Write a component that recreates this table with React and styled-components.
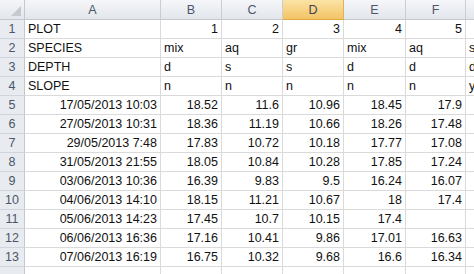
import React from "react";
import styled, { createGlobalStyle } from "styled-components";

const Global = createGlobalStyle`
    html, body {
        margin: 0;
        padding: 0;
        background: #ffffff;
        overflow: hidden;
    }
    body {
        font-family: "Liberation Sans", Arial, sans-serif;
    }
`;

const Sheet = styled.div`
    display: grid;
    grid-template-columns: 25px 136px 61px 61px 61px 62px 60px 64px;
    grid-template-rows: 20px;
    grid-auto-rows: 19px;
    width: 474px;
    height: 274px;
    overflow: hidden;
    font-size: 12.5px;
    color: #111;
`;

const Corner = styled.div`
    position: relative;
    background: linear-gradient(#f3f5f8, #e3e7ec);
    border-right: 1px solid #c3c8cf;
    border-bottom: 1px solid #c3c8cf;
    box-sizing: border-box;

    &::after {
        content: "";
        position: absolute;
        right: 3px;
        bottom: 3px;
        width: 0;
        height: 0;
        border-left: 10px solid transparent;
        border-bottom: 10px solid #c5cad1;
    }
`;

const ColHead = styled.div`
    box-sizing: border-box;
    display: flex;
    align-items: center;
    justify-content: center;
    padding-top: 1px;
    color: ${(p) => (p.$active ? "#3d4455" : "#4a5669")};
    background: ${(p) =>
        p.$active
            ? "linear-gradient(#fbe3a6, #f3c466)"
            : "linear-gradient(#f5f6f9, #e2e6eb)"};
    border-right: 1px solid ${(p) => (p.$active ? "#e3b258" : "#c9ced5")};
    border-bottom: 1px solid ${(p) => (p.$active ? "#e0a93f" : "#c3c8cf")};
`;

const RowHead = styled.div`
    box-sizing: border-box;
    display: flex;
    align-items: flex-end;
    justify-content: center;
    padding-bottom: 2px;
    overflow: hidden;
    color: #4a5669;
    background: #e8ebef;
    border-right: 1px solid #c3c8cf;
    border-bottom: 1px solid #d0d5db;
`;

const Cell = styled.div`
    box-sizing: border-box;
    display: flex;
    align-items: flex-end;
    justify-content: ${(p) => (p.$num ? "flex-end" : "flex-start")};
    padding: 0 3px 2px 3px;
    white-space: nowrap;
    overflow: hidden;
    border-right: 1px solid #dadada;
    border-bottom: 1px solid #dadada;
`;

const columns = ["A", "B", "C", "D", "E", "F", "G"];

// column G runs past the right edge, only its first letters show
const rows = [
    ["PLOT", 1, 2, 3, 4, 5, ""],
    ["SPECIES", "mix", "aq", "gr", "mix", "aq", "s"],
    ["DEPTH", "d", "s", "s", "d", "d", "d"],
    ["SLOPE", "n", "n", "n", "n", "n", "y"],
    ["17/05/2013 10:03", 18.52, 11.6, 10.96, 18.45, 17.9, ""],
    ["27/05/2013 10:31", 18.36, 11.19, 10.66, 18.26, 17.48, ""],
    ["29/05/2013 7:48", 17.83, 10.72, 10.18, 17.77, 17.08, ""],
    ["31/05/2013 21:55", 18.05, 10.84, 10.28, 17.85, 17.24, ""],
    ["03/06/2013 10:36", 16.39, 9.83, 9.5, 16.24, 16.07, ""],
    ["04/06/2013 14:10", 18.15, 11.21, 10.67, 18, 17.4, ""],
    ["05/06/2013 14:23", 17.45, 10.7, 10.15, 17.4, "", ""],
    ["06/06/2013 16:36", 17.16, 10.41, 9.86, 17.01, 16.63, ""],
    ["07/06/2013 16:19", 16.75, 10.32, 9.68, 16.6, 16.34, ""],
    ["", "", "", "", "", "", ""],
];

const isNum = (v, ci) =>
    typeof v === "number" || (ci === 0 && /\d\/\d/.test(String(v)));

const App = () => {
    return (
        <>
            <Global />
            <Sheet>
                <Corner />
                {columns.map((c) => (
                    <ColHead key={c} $active={c === "D"}>
                        {c === "G" ? "" : c}
                    </ColHead>
                ))}
                {rows.map((row, ri) => (
                    <React.Fragment key={ri}>
                        <RowHead>{ri < 13 ? ri + 1 : ""}</RowHead>
                        {row.map((v, ci) => (
                            <Cell key={ci} $num={isNum(v, ci)}>
                                {v}
                            </Cell>
                        ))}
                    </React.Fragment>
                ))}
            </Sheet>
        </>
    );
};

export default App;
